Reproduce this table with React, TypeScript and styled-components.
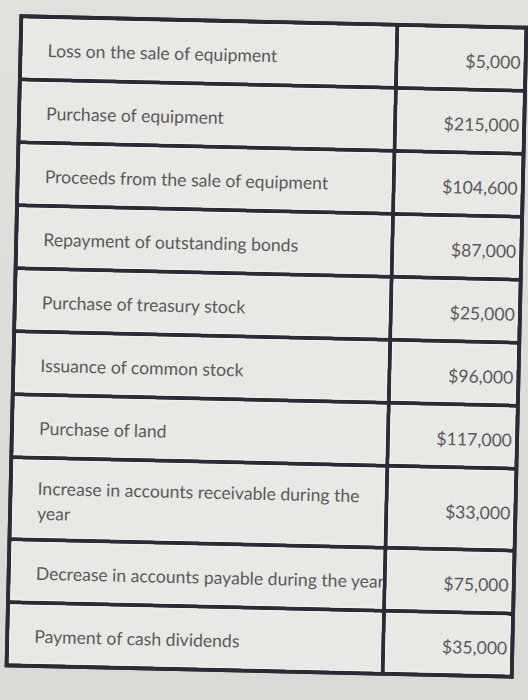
import * as React from "react";
import styled, { createGlobalStyle } from "styled-components";

interface Entry {
  label: string;
  amount: string;
  tall?: boolean;
}

const entries: Entry[] = [
  { label: "Loss on the sale of equipment", amount: "$5,000" },
  { label: "Purchase of equipment", amount: "$215,000" },
  { label: "Proceeds from the sale of equipment", amount: "$104,600" },
  { label: "Repayment of outstanding bonds", amount: "$87,000" },
  { label: "Purchase of treasury stock", amount: "$25,000" },
  { label: "Issuance of common stock", amount: "$96,000" },
  { label: "Purchase of land", amount: "$117,000" },
  { label: "Increase in accounts receivable during the year", amount: "$33,000", tall: true },
  { label: "Decrease in accounts payable during the year", amount: "$75,000" },
  { label: "Payment of cash dividends", amount: "$35,000" },
];

const GlobalStyle = createGlobalStyle`
  html, body {
    margin: 0;
    padding: 0;
    background: #dcdcd9;
  }
  body {
    width: 528px;
    height: 700px;
    overflow: hidden;
    font-family: Lato, "Open Sans", "Liberation Sans", sans-serif;
  }
`;

const Page = styled.div`
  width: 528px;
  height: 700px;
  box-sizing: border-box;
  padding: 20px 0 0 12px;
  background: linear-gradient(180deg, #e0e0dd 0%, #d9d9d6 100%);
`;

const Table = styled.div`
  width: 501px;
  display: grid;
  grid-template-columns: 372px 1fr;
  gap: 4px;
  border: 4px solid #2a2b36;
  background: #2a2b36;
  transform: rotate(1.3deg);
  transform-origin: center center;
`;

const Cell = styled.div<{ $tall?: boolean; $amount?: boolean }>`
  height: ${(p) => (p.$tall ? 78 : 59)}px;
  box-sizing: border-box;
  background: #e8e8e5;
  box-shadow: inset 0 0 0 1px #f2f2f0;
  color: #59595b;
  font-size: 17.6px;
  line-height: 25px;
  display: flex;
  align-items: center;
  justify-content: ${(p) => (p.$amount ? "flex-end" : "flex-start")};
  padding: ${(p) => (p.$amount ? "6px 3px 0 0" : "4px 0 0 25px")};
  text-align: ${(p) => (p.$amount ? "right" : "left")};
  white-space: ${(p) => (p.$tall ? "normal" : "nowrap")};
  overflow: hidden;
`;

const App: React.FC = () => {
  return (
    <>
      <GlobalStyle />
      <Page>
        <Table>
          {entries.map((item) => (
            <React.Fragment key={item.label}>
              <Cell $tall={item.tall}>{item.label}</Cell>
              <Cell $tall={item.tall} $amount>
                {item.amount}
              </Cell>
            </React.Fragment>
          ))}
        </Table>
      </Page>
    </>
  );
};

export default App;
